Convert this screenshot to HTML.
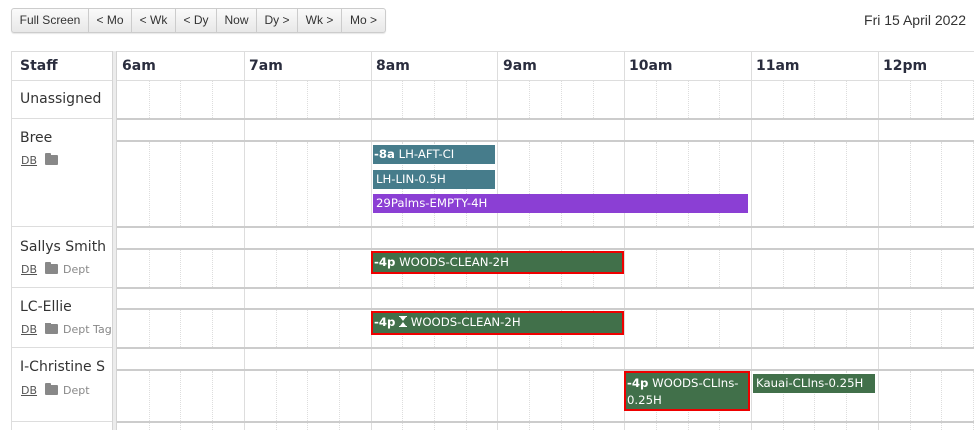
<!DOCTYPE html>
<html><head><meta charset="utf-8"><style>
*{margin:0;padding:0;box-sizing:border-box}
body{width:974px;height:430px;overflow:hidden;background:#fff;font-family:"DejaVu Sans",Verdana,sans-serif;position:relative}
.a{position:absolute}
.btns{position:absolute;left:11px;top:8px;height:25px;display:flex;border:1px solid #ccc;border-radius:3px;background:linear-gradient(#fafafa,#e8e8e8);box-shadow:0 1px 1px rgba(0,0,0,.1)}
.btns div{font-family:"Liberation Sans",Arial,sans-serif;font-size:12px;color:#333;line-height:23px;text-align:center;border-right:1px solid #ccc}
.btns div:last-child{border-right:none}
.hd{font-weight:bold;font-size:14px;color:#2a2d3e;top:58px}
.nm{font-size:14px;color:#333;left:20px}
.sub{font-size:11px;color:#888;left:21px}
.sub u{color:#555}
.fold{display:inline-block;width:13px;height:10px;background:#888;border-radius:1px;vertical-align:-1px;margin:0 5px 0 8px;position:relative}
.fold:before{content:"";position:absolute;left:0;top:-2px;width:6px;height:3px;background:#888;border-radius:1px 1px 0 0}
.ev{position:absolute;color:#fff;font-size:11.7px;line-height:15px;padding:2px 3px;white-space:nowrap;overflow:hidden}
.hl{background:#ccc;height:2px;left:117px;width:857px}
.sl{background:#ddd;height:1px;left:11px;width:101px}
</style></head><body>
<div class="btns">
<div style="width:77px">Full Screen</div><div style="width:43px">&lt; Mo</div><div style="width:44px">&lt; Wk</div><div style="width:41px">&lt; Dy</div><div style="width:40px">Now</div><div style="width:41px">Dy &gt;</div><div style="width:44px">Wk &gt;</div><div style="width:43px">Mo &gt;</div>
</div>
<div class="a" style="right:8px;top:12px;font-family:'Liberation Sans',Arial,sans-serif;font-size:14px;color:#333">Fri 15 April 2022</div>

<div id="grid"></div>
<div class="a" style="left:11px;top:51px;width:963px;height:1px;background:#ddd"></div>
<div class="a" style="left:11px;top:80px;width:963px;height:1px;background:#ddd"></div>
<div class="a" style="left:11px;top:51px;width:1px;height:379px;background:#ddd"></div>
<div class="a" style="left:112px;top:51px;width:5px;height:379px;background:#ececec;border-left:1px solid #d4d4d4;border-right:1px solid #d4d4d4"></div>

<div class="a hd" style="left:20px">Staff</div>
<div class="a hd" style="left:122px">6am</div>
<div class="a hd" style="left:249px">7am</div>
<div class="a hd" style="left:376px">8am</div>
<div class="a hd" style="left:503px">9am</div>
<div class="a hd" style="left:629px">10am</div>
<div class="a hd" style="left:756px">11am</div>
<div class="a hd" style="left:883px">12pm</div>

<div class="a hl" style="top:118px"></div>
<div class="a hl" style="top:140px"></div>
<div class="a hl" style="top:226px"></div>
<div class="a hl" style="top:248px"></div>
<div class="a hl" style="top:287px"></div>
<div class="a hl" style="top:308px"></div>
<div class="a hl" style="top:347px"></div>
<div class="a hl" style="top:369px"></div>
<div class="a hl" style="top:421px"></div>
<div class="a sl" style="top:118px"></div>
<div class="a sl" style="top:226px"></div>
<div class="a sl" style="top:287px"></div>
<div class="a sl" style="top:347px"></div>
<div class="a sl" style="top:421px"></div>

<div class="a nm" style="top:91px">Unassigned</div>
<div class="a nm" style="top:130px">Bree</div>
<div class="a sub" style="top:154px"><u>DB</u><span class="fold"></span></div>
<div class="a nm" style="top:239px">Sallys Smith</div>
<div class="a sub" style="top:263px"><u>DB</u><span class="fold"></span>Dept</div>
<div class="a nm" style="top:299px">LC-Ellie</div>
<div class="a sub" style="top:323px;width:91px;overflow:hidden;white-space:nowrap"><u>DB</u><span class="fold"></span>Dept Tag</div>
<div class="a nm" style="top:359px;width:91px;overflow:hidden;white-space:nowrap">I-Christine S</div>
<div class="a sub" style="top:384px"><u>DB</u><span class="fold"></span>Dept</div>

<div class="ev" style="left:373px;top:145px;width:122px;height:19px;background:#467c8b;padding-left:1px"><b>-8a</b> LH-AFT-CI</div>
<div class="ev" style="left:373px;top:170px;width:122px;height:19px;background:#467c8b">LH-LIN-0.5H</div>
<div class="ev" style="left:373px;top:194px;width:375px;height:19px;background:#8b3fd4">29Palms-EMPTY-4H</div>
<div class="ev" style="left:371px;top:251px;width:253px;height:23px;background:#41704a;border:2px solid #e00;padding:2px 1px"><b>-4p</b> WOODS-CLEAN-2H</div>
<div class="ev" style="left:371px;top:311px;width:253px;height:24px;background:#41704a;border:2px solid #e00;padding:2px 1px"><b>-4p</b> <span style="display:inline-block;width:8px;height:11px;border:1.5px solid #fff;border-left:none;border-right:none;position:relative;vertical-align:-1px"><span style="position:absolute;left:0;top:0;width:0;height:0;border-left:3px solid transparent;border-right:3px solid transparent;border-top:4px solid #fff;margin-left:1px"></span><span style="position:absolute;left:0;bottom:0;width:0;height:0;border-left:3px solid transparent;border-right:3px solid transparent;border-bottom:4px solid #fff;margin-left:1px"></span></span> WOODS-CLEAN-2H</div>
<div class="ev" style="left:624px;top:371px;width:126px;height:40px;background:#41704a;border:2px solid #e00;padding:2px 1px;white-space:normal;line-height:17px"><b>-4p</b> WOODS-CLIns-0.25H</div>
<div class="ev" style="left:753px;top:374px;width:122px;height:19px;background:#41704a">Kauai-CLIns-0.25H</div>

<script>
var g=document.getElementById('grid'),h='';
var bands=[[81,118],[142,226],[250,287],[310,347],[371,421],[423,430]];
for(var i=0;i<7;i++){var x=117+i*126.8;
 if(i>0)h+='<div class="a" style="left:'+Math.round(x)+'px;top:51px;width:1px;height:379px;background:#ddd"></div>';
 for(var q=1;q<4;q++){var xx=Math.round(x+q*31.7);
  bands.forEach(function(b){h+='<div class="a" style="left:'+xx+'px;top:'+b[0]+'px;width:0;height:'+(b[1]-b[0])+'px;border-left:1px dotted #ddd"></div>';});}
}
g.innerHTML=h;
</script>
</body></html>
